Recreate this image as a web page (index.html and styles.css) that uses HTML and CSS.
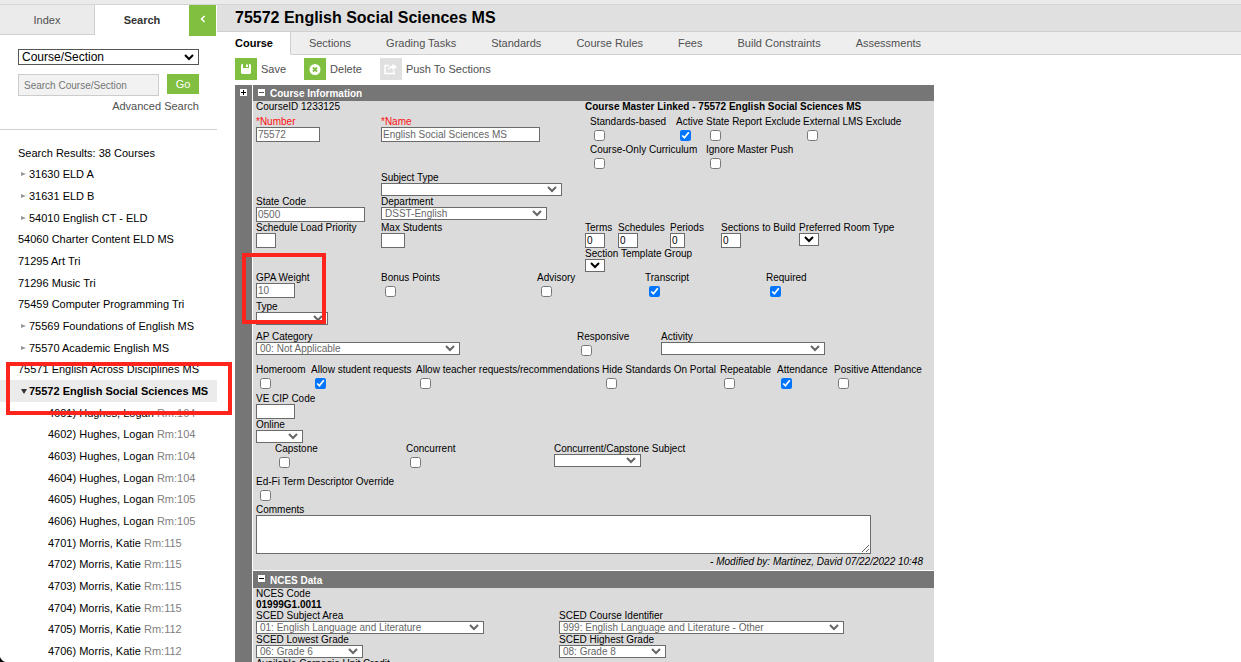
FILE: index.html
```html
<!DOCTYPE html>
<html lang="en">
<head>
<meta charset="utf-8">
<title>75572 English Social Sciences MS</title>
<link rel="stylesheet" href="styles.css">
</head>
<body>
<div class="top-strip"></div>
<div class="app">
  <aside class="sidebar">
    <div class="side-tabs">
      <button class="side-tab" type="button">Index</button>
      <button class="side-tab current" type="button">Search</button>
      <button class="collapse" type="button" aria-label="Collapse">
        <svg width="6" height="8" viewBox="0 0 6 8"><path d="M4.6 1 1.6 4l3 3" fill="none" stroke="#fff" stroke-width="1.6"/></svg>
      </button>
    </div>
    <form class="search">
      <select class="scope" aria-label="Search type"><option>Course/Section</option></select>
      <div class="search-line">
        <input class="query" type="text" placeholder="Search Course/Section" aria-label="Search Course/Section">
        <button class="go" type="button">Go</button>
      </div>
      <a class="advanced" href="#">Advanced Search</a>
    </form>
    <p class="count">Search Results: 38 Courses</p>
    <ul class="results">
      <li class="parent"><a href="#">31630 ELD A</a></li>
      <li class="parent"><a href="#">31631 ELD B</a></li>
      <li class="parent"><a href="#">54010 English CT - ELD</a></li>
      <li><a href="#">54060 Charter Content ELD MS</a></li>
      <li><a href="#">71295 Art Tri</a></li>
      <li><a href="#">71296 Music Tri</a></li>
      <li><a href="#">75459 Computer Programming Tri</a></li>
      <li class="parent"><a href="#">75569 Foundations of English MS</a></li>
      <li class="parent"><a href="#">75570 Academic English MS</a></li>
      <li><a href="#">75571 English Across Disciplines MS</a></li>
      <li class="parent open"><a href="#">75572 English Social Sciences MS</a><span class="callout callout-course"></span></li>
      <li class="section"><a href="#">4601) Hughes, Logan <span>Rm:104</span></a></li>
      <li class="section"><a href="#">4602) Hughes, Logan <span>Rm:104</span></a></li>
      <li class="section"><a href="#">4603) Hughes, Logan <span>Rm:104</span></a></li>
      <li class="section"><a href="#">4604) Hughes, Logan <span>Rm:104</span></a></li>
      <li class="section"><a href="#">4605) Hughes, Logan <span>Rm:105</span></a></li>
      <li class="section"><a href="#">4606) Hughes, Logan <span>Rm:105</span></a></li>
      <li class="section"><a href="#">4701) Morris, Katie <span>Rm:115</span></a></li>
      <li class="section"><a href="#">4702) Morris, Katie <span>Rm:115</span></a></li>
      <li class="section"><a href="#">4703) Morris, Katie <span>Rm:115</span></a></li>
      <li class="section"><a href="#">4704) Morris, Katie <span>Rm:115</span></a></li>
      <li class="section"><a href="#">4705) Morris, Katie <span>Rm:112</span></a></li>
      <li class="section"><a href="#">4706) Morris, Katie <span>Rm:112</span></a></li>
    </ul>
  </aside>

  <main class="main">
    <h1 class="title">75572 English Social Sciences MS</h1>
    <nav class="tabs">
      <a class="tab current" href="#">Course</a>
      <a class="tab" href="#">Sections</a>
      <a class="tab" href="#">Grading Tasks</a>
      <a class="tab" href="#">Standards</a>
      <a class="tab" href="#">Course Rules</a>
      <a class="tab" href="#">Fees</a>
      <a class="tab" href="#">Build Constraints</a>
      <a class="tab" href="#">Assessments</a>
    </nav>
    <div class="toolbar">
      <button class="tool" type="button">
        <svg width="22" height="22" viewBox="0 0 22 22"><path fill="#80bf40" d="M0 0h22v22H0z"/><path fill="#fff" d="M7 6h8l1 1v8l-1 1H7l-1-1V7z"/><path fill="#80bf40" d="M8 6h6v4H8z"/><path fill="#fff" d="M11 6.500h2v2.500h-2z"/></svg>
        Save
      </button>
      <button class="tool" type="button">
        <svg width="22" height="22" viewBox="0 0 22 22"><path fill="#80bf40" d="M0 0h22v22H0z"/><circle cx="11" cy="11.500" r="5.500" fill="#fff"/><path d="m9 9.500 4 4m0-4-4 4" stroke="#80bf40" stroke-width="1.800"/></svg>
        Delete
      </button>
      <button class="tool" type="button">
        <svg width="22" height="22" viewBox="0 0 22 22"><path fill="#e0e0e0" d="M0 0h22v22H0z"/><path d="M9 7.500H5v8h9v-3" fill="none" stroke="#fff" stroke-width="1.500"/><path fill="#fff" d="M12.500 5.500 17 9l-4.500 3.500v-2.200c-2.500 0-3.700.7-4.700 2.400 0-3 1.700-5 4.700-5z"/></svg>
        Push To Sections
      </button>
    </div>

    <div class="panel">
      <div class="rail"><button class="box-icon" type="button" aria-label="Expand all"><svg width="7" height="7" viewBox="0 0 7 7"><path fill="#fff" d="M0 0h7v7H0z"/><path d="M1 3.500h5M3.500 1v5" stroke="#000"/></svg></button></div>
      <form class="form">
        <h2 class="bar"><svg width="7" height="7" viewBox="0 0 7 7"><path fill="#fff" d="M0 0h7v7H0z"/><path d="M1 3.500h5" stroke="#555"/></svg>Course Information</h2>
        <div class="body">
          <div class="row cols-three ids"><span class="course-id">CourseID 1233125</span><strong>Course Master Linked - 75572 English Social Sciences MS</strong></div>

          <div class="row cols-three">
            <div class="field"><label class="req" for="number">*Number</label><input id="number" class="w64" type="text" value="75572"></div>
            <div class="field"><label class="req" for="name">*Name</label><input id="name" class="w159" type="text" value="English Social Sciences MS"></div>
            <div class="flags">
              <div class="field"><label for="std">Standards-based</label><input id="std" type="checkbox"></div>
              <div class="field"><label for="act">Active</label><input id="act" type="checkbox" checked></div>
              <div class="field"><label for="sre">State Report Exclude</label><input id="sre" type="checkbox"></div>
              <div class="field"><label for="lms">External LMS Exclude</label><input id="lms" type="checkbox"></div>
              <div class="field wide"><label for="coc">Course-Only Curriculum</label><input id="coc" type="checkbox"></div>
              <div class="field"><label for="imp">Ignore Master Push</label><input id="imp" type="checkbox"></div>
            </div>
          </div>

          <div class="row cols-three">
            <div class="field second"><label for="subj">Subject Type</label><select id="subj" class="w181"><option></option></select></div>
          </div>

          <div class="row cols-three">
            <div class="field"><label for="state">State Code</label><input id="state" class="w109" type="text" value="0500"></div>
            <div class="field"><label for="dept">Department</label><select id="dept" class="w166"><option>DSST-English</option></select></div>
          </div>

          <div class="row cols-three">
            <div class="field"><label for="slp">Schedule Load Priority</label><input id="slp" class="w20" type="text"></div>
            <div class="field"><label for="max">Max Students</label><input id="max" class="w24" type="text"></div>
            <div class="counts">
              <div class="field"><label for="terms">Terms</label><input id="terms" class="w20 dark" type="text" value="0"></div>
              <div class="field"><label for="scheds">Schedules</label><input id="scheds" class="w20 dark" type="text" value="0"></div>
              <div class="field"><label for="periods">Periods</label><input id="periods" class="w15 dark" type="text" value="0"></div>
              <div class="field"><label for="stb">Sections to Build</label><input id="stb" class="w20 dark" type="text" value="0"></div>
              <div class="field"><label for="prt">Preferred Room Type</label><select id="prt" class="w20 dark"><option></option></select></div>
            </div>
          </div>

          <div class="row cols-three">
            <div class="field third"><label for="stg">Section Template Group</label><select id="stg" class="w20 dark"><option></option></select></div>
          </div>

          <div class="row cols-gpa">
            <span class="callout callout-gpa"></span>
            <div class="field"><label for="gpa">GPA Weight</label><input id="gpa" class="w39" type="text" value="10"></div>
            <div class="field"><label for="bonus">Bonus Points</label><input id="bonus" type="checkbox"></div>
            <div class="field"><label for="adv">Advisory</label><input id="adv" type="checkbox"></div>
            <div class="field"><label for="trans">Transcript</label><input id="trans" type="checkbox" checked></div>
            <div class="field"><label for="reqd">Required</label><input id="reqd" type="checkbox" checked></div>
          </div>

          <div class="row">
            <div class="field"><label for="type">Type</label><select id="type" class="w72"><option></option></select></div>
          </div>

          <div class="row cols-ap">
            <div class="field"><label for="ap">AP Category</label><select id="ap" class="w204"><option>00: Not Applicable</option></select></div>
            <div class="field"><label for="resp">Responsive</label><input id="resp" type="checkbox"></div>
            <div class="field"><label for="activity">Activity</label><select id="activity" class="w164"><option></option></select></div>
          </div>

          <div class="row cols-options">
            <div class="field"><label for="home">Homeroom</label><input id="home" type="checkbox"></div>
            <div class="field"><label for="asr">Allow student requests</label><input id="asr" type="checkbox" checked></div>
            <div class="field"><label for="atr">Allow teacher requests/recommendations</label><input id="atr" type="checkbox"></div>
            <div class="field"><label for="hide">Hide Standards On Portal</label><input id="hide" type="checkbox"></div>
            <div class="field"><label for="rep">Repeatable</label><input id="rep" type="checkbox"></div>
            <div class="field"><label for="att">Attendance</label><input id="att" type="checkbox" checked></div>
            <div class="field"><label for="pos">Positive Attendance</label><input id="pos" type="checkbox"></div>
          </div>

          <div class="row">
            <div class="field"><label for="cip">VE CIP Code</label><input id="cip" class="w39" type="text"></div>
          </div>
          <div class="row">
            <div class="field"><label for="online">Online</label><select id="online" class="w47"><option></option></select></div>
          </div>

          <div class="row cols-capstone">
            <div class="field"><label for="cap">Capstone</label><input id="cap" type="checkbox"></div>
            <div class="field"><label for="con">Concurrent</label><input id="con" type="checkbox"></div>
            <div class="field"><label for="ccs">Concurrent/Capstone Subject</label><select id="ccs" class="w87"><option></option></select></div>
          </div>

          <div class="row edfi">
            <div class="field"><label for="edfi">Ed-Fi Term Descriptor Override</label><input id="edfi" type="checkbox"></div>
          </div>
          <div class="field comments"><label for="comments">Comments</label><textarea id="comments"></textarea></div>
          <p class="modified">- Modified by: Martinez, David 07/22/2022 10:48</p>
        </div>

        <h2 class="bar nces"><svg width="7" height="7" viewBox="0 0 7 7"><path fill="#fff" d="M0 0h7v7H0z"/><path d="M1 3.500h5" stroke="#000"/></svg>NCES Data</h2>
        <div class="body">
          <div class="row code"><span>NCES Code</span><strong>01999G1.0011</strong></div>
          <div class="row cols-sced">
            <div class="field"><label for="area">SCED Subject Area</label><select id="area" class="w228"><option>01: English Language and Literature</option></select></div>
            <div class="field"><label for="ident">SCED Course Identifier</label><select id="ident" class="w285"><option>999: English Language and Literature - Other</option></select></div>
          </div>
          <div class="row cols-sced">
            <div class="field"><label for="low">SCED Lowest Grade</label><select id="low" class="w107"><option>06: Grade 6</option></select></div>
            <div class="field"><label for="high">SCED Highest Grade</label><select id="high" class="w107"><option>08: Grade 8</option></select></div>
          </div>
          <div class="row"><div class="field"><label for="carnegie">Available Carnegie Unit Credit</label><input id="carnegie" class="w39" type="text"></div></div>
        </div>
      </form>
    </div>
  </main>
</div>
<div class="corner"></div>
</body>
</html>
```
FILE: styles.css
```css
* { box-sizing: border-box; }

body {
  margin: 0;
  height: 100vh;
  overflow: hidden;
  display: flex;
  flex-direction: column;
  background: #fff;
  color: #000;
  font-family: "Liberation Sans", Arial, sans-serif;
  font-size: 11px;
}

a { color: inherit; text-decoration: none; }
h1, h2, p, ul { margin: 0; padding: 0; }
button, input, select, textarea { font-family: inherit; margin: 0; }
button { border: 0; padding: 0; background: none; }

.top-strip { flex: none; height: 5px; background: #ebebeb; border-bottom: 1px solid #d6d6d6; }
.app { flex: 1; min-height: 0; display: flex; }

/* Sidebar */
.sidebar { flex: none; width: 217px; }
.side-tabs { display: flex; height: 31px; padding-right: 1px; }
.side-tab {
  flex: 1;
  height: 30px;
  background: #ebebeb;
  border-right: 1px solid #d0d0d0;
  border-bottom: 1px solid #d0d0d0;
  color: #505050;
  font-size: 11px;
}
.side-tab.current { background: #fff; border: 0; color: #333; font-weight: bold; }
.collapse { width: 27px; background: #80bf40; padding-bottom: 4px; }

.search {
  display: flex;
  flex-direction: column;
  align-items: stretch;
  padding: 13px 18px 16px;
  border-bottom: 1px solid #d0d0d0;
}
.search-line { display: flex; gap: 8px; margin-top: 9px; align-items: flex-start; }
.query {
  flex: 1;
  min-width: 0;
  height: 22px;
  padding: 1px 5px 0;
  border: 1px solid #ccc;
  background: #f2f2f2;
  font-size: 10px;
}
.query::placeholder { color: #757575; }
.go { width: 32px; height: 20px; background: #80bf40; color: #fff; font-size: 11px; }
.advanced { align-self: flex-end; margin-top: 4px; line-height: 13px; color: #505050; }
.count { padding: 13px 18px 0; line-height: 20px; }

.results { list-style: none; }
.results li { position: relative; display: flex; align-items: center; height: 22px; padding-left: 18px; white-space: nowrap; }
.results li:nth-child(3n) { height: 21px; }
.results .parent { padding-left: 21px; }
.results .parent::before { content: ""; margin-right: 3px; border: solid transparent; border-width: 2px 0 2px 5px; border-left-color: #999; }
.results .open { background: #ebebeb; font-weight: bold; }
.results .open::before { border-width: 5px 3px 0; border-top-color: #333; border-left-color: transparent; margin-right: 2px; }
.results .section { padding-left: 48px; }
.results .section span { color: #808080; }

.callout { position: absolute; z-index: 2; border: 4px solid #ff241c; pointer-events: none; }
.callout-course { left: 6px; top: -18px; width: 226px; height: 53px; }
.callout-gpa { left: -14px; top: -20px; width: 84px; height: 71px; }

/* Main column */
.main { flex: 1; min-width: 0; display: flex; flex-direction: column; }
.title { flex: none; padding-left: 18px; line-height: 26px; background: #e0e0e0; border-bottom: 1px solid #d0d0d0; font-size: 16px; }
.tabs { flex: none; display: flex; height: 23px; background: #eee; }
.tab { padding: 0 17px 0 18px; line-height: 22px; border-bottom: 1px solid #d0d0d0; color: #505050; white-space: nowrap; }
.tab:last-child { flex: 1; }
.tab.current { background: #fff; border-right: 1px solid #d0d0d0; border-bottom-color: #fff; color: #000; font-weight: bold; }

.toolbar { flex: none; display: flex; gap: 18px; padding: 3px 18px 5px; }
.tool { display: flex; align-items: center; gap: 4px; color: #505050; font-size: 11px; }

.panel { flex: none; display: flex; margin-left: 18px; max-width: 699px; }
.rail { flex: none; width: 18px; padding: 4px 0 0 5px; background: #767676; border-right: 1px solid #fff; }
.box-icon { display: block; }
.box-icon svg { display: block; }
.form { flex: 1; min-width: 0; background: #dbdbdb; font-size: 10px; line-height: 10px; }
.bar { display: flex; align-items: center; gap: 5px; height: 16px; padding: 2px 0 0 5px; background: #767676; color: #fff; font-size: 10px; line-height: 14px; }
.bar svg { margin-bottom: 4px; }
.nces { height: 18px; border-top: 1px solid #fff; }
.body { padding: 1px 3px; }

/* Form rows */
.row { position: relative; display: grid; justify-items: start; white-space: nowrap; margin-bottom: 1px; }
.cols-three { grid-template-columns: 125px 204px 1fr; }
.second { grid-column: 2; }
.third { grid-column: 3; }
.ids { margin-bottom: 5px; }
.course-id { grid-column: span 2; }
.flags { display: grid; grid-template-columns: 86px 30px 97px 1fr; row-gap: 4px; padding: 0 0 3px 5px; }
.wide { grid-column: span 2; }
.counts { display: grid; grid-template-columns: 33px 52px 51px 78px 1fr; }
.cols-gpa { grid-template-columns: 125px 156px 108px 121px 1fr; margin-bottom: 4px; }
.cols-gpa + .row { margin-bottom: 7px; }
.cols-ap { grid-template-columns: 321px 84px 1fr; margin-bottom: 9px; }
.cols-options { grid-template-columns: 55px 105px 186px 118px 57px 57px 1fr; margin-bottom: 5px; }
.cols-capstone { grid-template-columns: 131px 148px 1fr; padding-left: 19px; margin-bottom: 9px; }
.edfi { margin-bottom: 4px; }

.field { display: flex; flex-direction: column; align-items: flex-start; }
.req { color: #ff1010; }

.field input[type="text"], .field select, .field textarea {
  border: 1px solid #6b6b6b;
  border-radius: 0;
  background-color: #fff;
  color: #666;
  font-size: 10px;
}
.field input[type="text"] { height: 15px; padding: 0 1px; }
.field input[type="checkbox"] { width: 11px; height: 11px; margin: 3px 0 0 4px; }
.field input.dark, .field select.dark { color: #000; }

select { appearance: none; background-repeat: no-repeat; background-position: right 4px center; }
.field select {
  height: 13px;
  padding: 0 3px;
  line-height: 11px;
  background-image: url("data:image/svg+xml,%3Csvg xmlns='http://www.w3.org/2000/svg' width='10' height='7'%3E%3Cpath d='M1 1l4 4 4-4' fill='none' stroke='%23666' stroke-width='2'/%3E%3C/svg%3E");
}
.scope, .field select.dark {
  background-image: url("data:image/svg+xml,%3Csvg xmlns='http://www.w3.org/2000/svg' width='10' height='7'%3E%3Cpath d='M1 1l4 4 4-4' fill='none' stroke='%23000' stroke-width='2'/%3E%3C/svg%3E");
}
.scope { height: 16px; padding: 0 3px; border: 1px solid #555; border-radius: 0; background-color: #fff; color: #000; font-size: 12px; line-height: 14px; }

.comments textarea { display: block; width: 615px; max-width: 100%; height: 39px; }
.modified { padding: 3px 8px 2px 0; line-height: 10px; text-align: right; font-style: italic; }
.code { row-gap: 1px; }
.cols-sced { grid-template-columns: 303px 1fr; }

.w15 { width: 15px; }
.w20 { width: 20px; }
.w24 { width: 24px; }
.w39 { width: 39px; }
.w47 { width: 47px; }
.w64 { width: 64px; }
.w72 { width: 72px; }
.w87 { width: 87px; }
.w107 { width: 107px; }
.w109 { width: 109px; }
.w159 { width: 159px; }
.w164 { width: 164px; }
.w166 { width: 166px; }
.w181 { width: 181px; }
.w204 { width: 204px; }
.w228 { width: 228px; }
.w285 { width: 285px; }

.corner { position: absolute; left: 0; bottom: 0; width: 8px; height: 8px; background: radial-gradient(circle at 100% 0, transparent 8px, #000 9px); }
```
